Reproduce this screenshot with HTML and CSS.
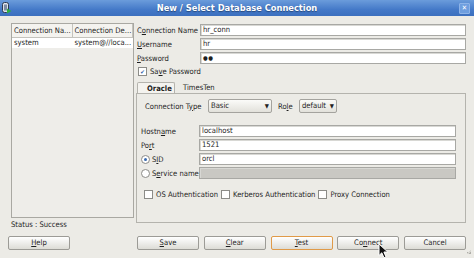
FILE: index.html
```html
<!DOCTYPE html>
<html lang="en">
<head>
    <meta charset="UTF-8" />
    <title>New / Select Database Connection</title>
    <link rel="stylesheet" href="styles.css">
</head>
<body>

<div class="window">
    <div class="titlebar">
        <svg class="app-icon" width="10" height="12" viewBox="0 0 10 12">
            <rect x="0.5" y="0.5" width="6" height="10" rx="2" fill="#dfe3ea" stroke="#2c3a50" stroke-width="1"/>
            <rect x="2" y="2.5" width="3" height="6" fill="#7d8ca4"/>
            <path d="M5 6.5 L9.5 9 L5 11.5 Z" fill="#2fb040"/>
        </svg>
        <div class="title">New / Select Database Connection</div>
        <div class="close">✕</div>
    </div>

    <div class="content">
        <div class="left">
            <div class="list">
                <div class="list-head">
                    <div class="cell">Connection Na...</div>
                    <div class="cell">Connection De...</div>
                </div>
                <div class="list-row">
                    <div class="cell">system</div>
                    <div class="cell">system@//loca...</div>
                </div>
            </div>
            <div class="status">Status : Success</div>
        </div>

        <div class="right">
            <div class="field">
                <label>C<u>o</u>nnection Name</label>
                <div class="input">hr_conn</div>
            </div>
            <div class="field">
                <label><u>U</u>sername</label>
                <div class="input">hr</div>
            </div>
            <div class="field">
                <label><u>P</u>assword</label>
                <div class="input dots">●●</div>
            </div>
            <div class="check-line">
                <span class="checkbox checked">✔</span>
                <span>Sa<u>v</u>e Password</span>
            </div>

            <div class="tabs">
                <div class="tab active">Oracle</div>
                <div class="tab">TimesTen</div>
            </div>
            <div class="tab-panel">
                <div class="type-row">
                    <span class="type-label">Connection T<u>y</u>pe</span>
                    <div class="combo wide">Basic<span class="arrow">▼</span></div>
                    <span class="role-label">Ro<u>l</u>e</span>
                    <div class="combo">default<span class="arrow">▼</span></div>
                </div>

                <div class="field inner">
                    <label>Hostn<u>a</u>me</label>
                    <div class="input">localhost</div>
                </div>
                <div class="field inner">
                    <label>Po<u>r</u>t</label>
                    <div class="input">1521</div>
                </div>
                <div class="field inner">
                    <label class="radio-label"><span class="radio on"></span><span>S<u>I</u>D</span></label>
                    <div class="input">orcl</div>
                </div>
                <div class="field inner">
                    <label class="radio-label"><span class="radio"></span><span>S<u>e</u>rvice name</span></label>
                    <div class="input disabled"></div>
                </div>

                <div class="auth-row">
                    <span class="checkbox"></span><span class="auth-text">OS Authentication</span>
                    <span class="checkbox"></span><span class="auth-text">Kerberos Authentication</span>
                    <span class="checkbox"></span><span class="auth-text">Proxy Connection</span>
                </div>
            </div>
        </div>
    </div>

    <div class="buttons">
        <div class="btn"><u>H</u>elp</div>
        <div class="btn-group">
            <div class="btn"><u>S</u>ave</div>
            <div class="btn"><u>C</u>lear</div>
            <div class="btn focused"><u>T</u>est</div>
            <div class="btn">Co<u>n</u>nect</div>
            <div class="btn">Cancel</div>
        </div>
    </div>

    <svg class="pointer" width="12" height="16" viewBox="0 0 12 16">
        <path d="M1 1 L1 12.5 L3.8 9.8 L6 14.8 L8 13.9 L5.9 9 L9.8 9 Z" fill="#111" stroke="#fff" stroke-width="1"/>
    </svg>
    <div class="grip"></div>
</div>

</body>
</html>
```

FILE: styles.css
```css
body {
    margin: 0;
    background-color: #ecebe6;
    font-family: "DejaVu Sans Condensed", "DejaVu Sans", sans-serif;
    font-size: 7.6px;
    color: #1e1e1e;
}

u {
    text-decoration: underline;
}

.window {
    position: relative;
    width: 474px;
    height: 258px;
    overflow: hidden;
}

.titlebar {
    display: flex;
    align-items: center;
    height: 16px;
    padding: 0 4px 0 2px;
    background: linear-gradient(#6b9cdb, #4479c8 60%, #3b6fbe);
    color: white;
}

.app-icon {
    flex: none;
}

.title {
    flex: 1;
    text-align: center;
    padding-left: 3px;
    font-family: "DejaVu Sans", sans-serif;
    font-weight: bold;
    font-size: 8.3px;
    text-shadow: 0 1px 1px #27487a;
}

.close {
    width: 9px;
    height: 9px;
    line-height: 9px;
    text-align: center;
    font-size: 7px;
    font-weight: bold;
    background: #6e9edf;
    border: 1px solid #8db3e8;
    border-radius: 1px;
}

.content {
    display: grid;
    grid-template-columns: 123px 329px;
    column-gap: 3px;
    padding: 7px 0 0 11px;
}

.left {
    display: flex;
    flex-direction: column;
}

.list {
    height: 193px;
    background: #eeede9;
    border: 1px solid #a9a8a2;
}

.list-head,
.list-row {
    display: flex;
}

.list-head .cell {
    height: 13px;
    line-height: 13px;
    background: #f4f3ef;
    border-right: 1px solid #c4c3bd;
    border-bottom: 1px solid #c4c3bd;
}

.list-row {
    background: #fff;
}

.cell {
    width: 59px;
    padding-left: 2px;
    white-space: nowrap;
    overflow: hidden;
}

.list-row .cell {
    height: 10px;
    line-height: 10px;
}

.status {
    margin-top: 2px;
    height: 9px;
    line-height: 9px;
}

.right {
    display: flex;
    flex-direction: column;
}

.field {
    display: flex;
    align-items: center;
    height: 14px;
}

.field label {
    width: 63px;
    flex: none;
    white-space: nowrap;
}

.input {
    flex: 1;
    height: 10px;
    line-height: 10px;
    padding-left: 2px;
    background: #fff;
    border: 1px solid #a8a8a4;
    box-shadow: inset 1px 1px 0 #d8d8d4;
}

.dots {
    font-size: 6px;
    letter-spacing: 0.5px;
}

.input.disabled {
    background: #c9c8c3;
}

.check-line {
    display: flex;
    align-items: center;
    gap: 3px;
    height: 13px;
    margin-left: 1px;
}

.checkbox {
    display: inline-block;
    flex: none;
    width: 7px;
    height: 7px;
    line-height: 7px;
    font-size: 6px;
    text-align: center;
    color: #2f5fa8;
    background: #fff;
    border: 1px solid #8c8c88;
}

.tabs {
    display: flex;
    margin-top: 4px;
    height: 11px;
}

.tab {
    padding: 0 8px;
    line-height: 11px;
}

.tab.active {
    font-weight: bold;
    background: #f4f3ef;
    border: 1px solid #b4b3ad;
    border-bottom: none;
    border-radius: 2px 2px 0 0;
    padding: 0 4px 0 9px;
    width: 23px;
}

.tab-panel {
    height: 123px;
    margin-left: -1px;
    padding: 5px 9px 0 4px;
    border: 1px solid #b4b3ad;
}

.type-row {
    display: flex;
    align-items: center;
    height: 14px;
    margin-left: 4px;
    margin-bottom: 11px;
}

.type-label {
    width: 63px;
}

.role-label {
    margin-left: 6px;
    width: 21px;
}

.combo {
    position: relative;
    width: 34px;
    height: 12px;
    line-height: 12px;
    padding-left: 2px;
    background: linear-gradient(#fbfbf9, #e2e1db);
    border: 1px solid #a4a39e;
    border-radius: 2px;
}

.combo.wide {
    width: 60px;
}

.arrow {
    position: absolute;
    right: 2px;
    top: 0;
    font-size: 6px;
    color: #222;
}

.field.inner label {
    width: 58px;
}

.radio-label {
    display: flex;
    align-items: center;
    gap: 2px;
}

.radio {
    display: inline-block;
    width: 7px;
    height: 7px;
    border-radius: 50%;
    background: #fff;
    border: 1px solid #8c8c88;
    position: relative;
}

.radio.on::after {
    content: "";
    position: absolute;
    left: 2px;
    top: 2px;
    width: 3px;
    height: 3px;
    border-radius: 50%;
    background: #3a6ab0;
}

.auth-row {
    display: flex;
    align-items: center;
    height: 11px;
    margin-top: 9px;
    margin-left: 3px;
}

.auth-text {
    margin-left: 3px;
    margin-right: 3px;
}

.buttons {
    display: flex;
    justify-content: space-between;
    padding: 7px 8px 0 8px;
}

.btn-group {
    display: flex;
    gap: 4.75px;
}

.btn {
    width: 60px;
    height: 12px;
    line-height: 12px;
    text-align: center;
    background: linear-gradient(#ffffff, #dddcd6);
    border: 1px solid #9c9b96;
    border-radius: 2px;
}

.btn.focused {
    border-color: #e09a48;
}

.pointer {
    position: absolute;
    left: 378px;
    top: 243px;
}

.grip {
    position: absolute;
    right: 3px;
    bottom: 4px;
    width: 5px;
    height: 5px;
    background: linear-gradient(135deg, transparent 50%, #b0afa9 50%, transparent 65%, #b0afa9 80%);
}
```
